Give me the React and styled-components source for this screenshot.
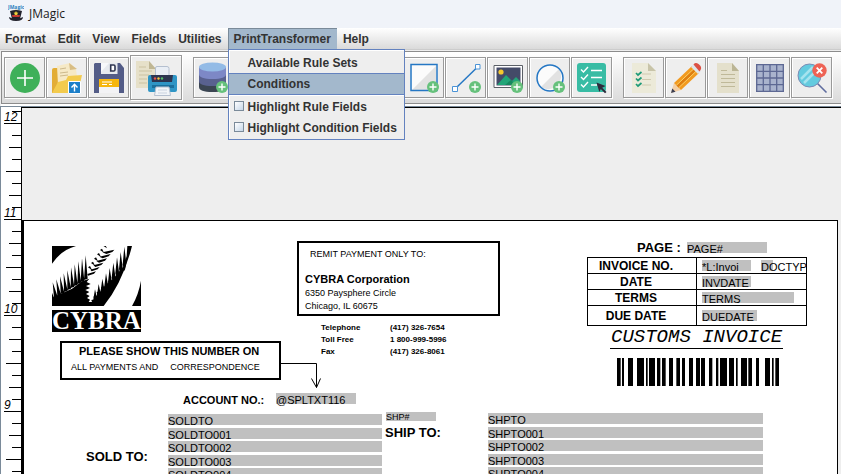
import React, { useState } from "react";
import styled, { createGlobalStyle, css } from "styled-components";
import { Barcode, Box, Table, Type } from "lucide-react";

const menus = [
  "Format",
  "Edit",
  "View",
  "Fields",
  "Utilities",
  "PrintTransformer",
  "Help",
];

const addresses = ["", "001", "002", "003", "004"];

// start and width of every bar, in thirds of a pixel
const bars = [
  [0, 11], [15, 6], [33, 15], [60, 21], [87, 5], [96, 18], [120, 10],
  [135, 11], [156, 12], [178, 11], [195, 9], [216, 12], [237, 12], [252, 12],
  [276, 10], [297, 7], [309, 21], [336, 15], [357, 5], [372, 18], [394, 11],
  [417, 9], [444, 15], [465, 5], [475, 11],
];

// one mark per eighth of an inch, going down
const marks = Array.from({ length: 33 }, (_, i) => {
  const n = i - 1;
  if (n % 8 === 0) return { size: 17, label: 12 - n / 8 };
  if (n % 4 === 0) return { size: 15 };
  if (n % 2 === 0) return { size: 12 };
  return { size: 9 };
});

const Plus = ({ x = 30, y = 30 }) => (
  <g>
    <circle cx={x} cy={y} r="6" fill="#66c17c" />
    <path
      d={`M${x - 3.5} ${y}h7M${x} ${y - 3.5}v7`}
      stroke="#fff"
      strokeWidth="1.4"
    />
  </g>
);

const NewIcon = () => (
  <Icon>
    <circle cx="21" cy="21" r="15" fill="#3fb059" />
    <path d="M21 13v16M13 21h16" stroke="#fff" strokeWidth="1.6" />
  </Icon>
);

const OpenIcon = () => (
  <Icon>
    <path d="M6 13q0-2 2-2h5v25H6z" fill="#e3ad35" />
    <path d="M11 9l13-3 6 6 2 16H12z" fill="#f6e9c6" />
    <path d="M23 6l1 7 7-1z" fill="#d8bd84" />
    <path
      d="M14 12l6-1M14 16l8-1M14 19l8-1"
      stroke="#cdb98c"
      strokeWidth="1"
    />
    <path d="M12 25l8-2 2-4 14-1-4 18H6z" fill="#f3cb4e" />
    <path d="M22.500 24.500h12v12h-12z" fill="#1c7fc9" stroke="#fff" />
    <path
      d="M28.500 34.500v-7M25.500 30.500l3-3.200 3 3.200"
      fill="none"
      stroke="#fff"
      strokeWidth="1.4"
    />
  </Icon>
);

const SaveIcon = () => (
  <Icon>
    <path d="M7 6h25l4 5v25H6V7z" fill="#535c87" />
    <path d="M13 6h16.500v11H13z" fill="#e6e9ee" />
    <path d="M13 6h8l-8 9z" fill="#f7f8fa" />
    <path
      d="M22.700 8h3q1.300 0 1.300 1.300v3.400q0 1.300-1.300 1.300h-3z"
      fill="#fff"
      stroke="#2f3550"
      strokeWidth="1.6"
    />
    <path d="M11 22h20v8H11z" fill="#f6b60d" />
    <path d="M11 30h20v6H11z" fill="#f3f3f5" />
    <path d="M14 25h10M14 27.500h5M21 27.500h3" stroke="#fff" />
  </Icon>
);

const PrintIcon = () => (
  <Icon $wide viewBox="1 1 50 43">
    <path d="M6 6h13l7 8v19H6z" fill="#e6e0c9" />
    <path d="M19 6v8h7z" fill="#bfb694" />
    <path
      d="M9 12h7M9 16h13M9 20h10M9 24h8M9 28h8"
      stroke="#cbc2a2"
      strokeWidth="1.2"
    />
    <path
      d="M25.500 13q0-1.500 1.500-1.500h10q2 0 2 2V21H25.500z"
      fill="#e9eef5"
      stroke="#b4bfcf"
    />
    <rect x="18" y="20" width="29" height="17" rx="2" fill="#2f95c5" />
    <path d="M21 20h22l-1 7H22z" fill="#2d3550" />
    <circle cx="25" cy="23.500" r="1.200" fill="#e8554a" />
    <circle cx="28.500" cy="23.500" r="1.200" fill="#f4c63d" />
    <circle cx="32" cy="23.500" r="1.200" fill="#54c06a" />
    <path d="M22 30h22v3H22z" fill="#1b6f9c" />
    <path d="M26 32h13l1.500 8.500h-16z" fill="#f1f4f8" stroke="#b4bfcf" />
    <path d="M28 35h9M28 38h9" stroke="#c9d2df" />
  </Icon>
);

const DatabaseIcon = () => (
  <Icon>
    <path d="M6 24v6q0 5 13.500 5T33 30v-6z" fill="#3b4552" />
    <path d="M6 17v7q0 5 13.500 5T33 24v-7z" fill="#59618f" />
    <path d="M6 10v7q0 5 13.500 5T33 17v-7z" fill="#7d88c6" />
    <ellipse cx="19.500" cy="10" rx="13.500" ry="4.500" fill="#93bbe6" />
    <Plus x={29} />
  </Icon>
);

const RectIcon = () => (
  <Icon>
    <path d="M7.500 7.500h27v26h-27z" fill="#fbfbfb" />
    <path d="M33 9v24H9z" fill="#e2e2e2" />
    <path
      d="M8 7.500h26v26H8z"
      fill="none"
      stroke="#2577c4"
      strokeWidth="1.5"
    />
    <Plus />
  </Icon>
);

const LineIcon = () => (
  <Icon>
    <path d="M12 30L31 11.500" stroke="#2577c4" strokeWidth="1.5" />
    <path
      d="M7.500 29.500h5v5h-5zM30.500 7.500h4.500v4.500h-4.500z"
      fill="#fff"
      stroke="#4a93d6"
    />
    <Plus />
  </Icon>
);

const ImageIcon = () => (
  <Icon>
    <path d="M7 8.500h28.500v22H7z" fill="#fff" stroke="#5a5f66" />
    <path d="M9.500 10.500h24v18h-24z" fill="#444b68" />
    <circle cx="14" cy="15" r="2.600" fill="#f7c92e" />
    <path d="M10 28l9-10 6 6 4-4 4 4v4z" fill="#22a578" />
    <path d="M18 28l6-5 5 5z" fill="#17885f" />
    <Plus />
  </Icon>
);

const CircleIcon = () => (
  <Icon>
    <circle cx="21" cy="21" r="13" fill="#fbfbfb" />
    <path d="M30 12a13 13 0 0 1-18 18z" fill="#e2e2e2" />
    <circle
      cx="21"
      cy="21"
      r="13"
      fill="none"
      stroke="#2577c4"
      strokeWidth="1.5"
    />
    <Plus />
  </Icon>
);

const RulesIcon = () => (
  <Icon>
    <rect x="6" y="6" width="29" height="29" rx="3" fill="#38bca4" />
    <path
      d="M10 12.500l2.500 2.500 4.500-5M10 20l2.500 2.500 4.500-5M10 27.500l2.500 2.500 4.500-5M20 13.500h11M20 20.500h11M20 28h6"
      fill="none"
      stroke="#fff"
      strokeWidth="1.4"
    />
    <path
      d="M25.500 25.500l9 3.500-3.300 1.700 4.300 4.300-1.500 1.300-4.200-4.300-1.500 3z"
      fill="#2e2a3c"
    />
  </Icon>
);

const ChecklistIcon = () => (
  <Icon>
    <path d="M9 6h16l8 8v22H9z" fill="#ecead9" />
    <path d="M25 6v8h8z" fill="#c8c4a9" />
    <path d="M19 17h9M19 22.500h9M19 28h9" stroke="#cfcab0" />
    <path
      d="M13 16l2 2 3.500-3M13 21.500l2 2 3.500-3M13 27l2 2 3.500-3"
      fill="none"
      stroke="#1f9b78"
      strokeWidth="1.7"
    />
  </Icon>
);

const PencilIcon = () => (
  <Icon>
    <path d="M6 36l3-10 7 7z" fill="#f3cfa6" />
    <path d="M6 36l1.300-4.500 3.200 3.200z" fill="#3c3f52" />
    <path d="M9 26l18-17 7 7-18 17z" fill="#f29a1f" />
    <path d="M11.300 28.300l18-17 2.400 2.400-18 17z" fill="#e07f10" />
    <path d="M11.300 28.300l18-17M13.700 30.700l18-17" stroke="#fbd36a" />
    <path d="M26 10l3-3 7 7-3 3z" fill="#dfe5ea" />
    <path d="M28.500 7.500q2-2.500 5-.5 4 3 2 6l-1 1.500z" fill="#dc5145" />
  </Icon>
);

const PageIcon = () => (
  <Icon>
    <path d="M10 6h15l7 8v22H10z" fill="#e4e0cc" />
    <path d="M25 6v8h7z" fill="#bbb595" />
    <path
      d="M14 13.500h6M14 17.500h14M14 21.500h14M14 25.500h14M14 29.500h14"
      stroke="#bfb999"
      strokeWidth="1.2"
    />
  </Icon>
);

const GridIcon = () => (
  <Icon>
    <path d="M7 7h28v28H7z" fill="#a9b3cd" />
    <path
      d="M7.700 7v28M14.300 7v28M21 7v28M27.700 7v28M34.300 7v28M7 7.700h28M7 14.300h28M7 21h28M7 27.700h28M7 34.300h28"
      stroke="#5d6893"
      strokeWidth="1.3"
    />
  </Icon>
);

const NoZoomIcon = () => (
  <Icon>
    <path d="M26 26l9.500 9.500" stroke="#5f6c9f" strokeWidth="1.6" />
    <circle
      cx="18.500"
      cy="18.500"
      r="11.500"
      fill="#63cbdf"
      stroke="#7c8bb5"
    />
    <path
      d="M10 22L22 10M13 26L26 13"
      stroke="#a5e3ee"
      strokeWidth="2.500"
    />
    <circle cx="28.500" cy="13.500" r="7.200" fill="#ee6355" />
    <path
      d="M25.700 10.700l5.600 5.600M31.300 10.700l-5.600 5.600"
      stroke="#fff"
      strokeWidth="1.8"
    />
  </Icon>
);

const HatIcon = () => (
  <HatSvg viewBox="0 0 16 16">
    <text x="0" y="4" fontSize="5" fontWeight="bold" fill="#2a7fc0">
      JMagic
    </text>
    <path d="M6 8l2-4 2 4z" fill="#e7b830" />
    <path d="M2 6q6-2 12 0l-2 8H4z" fill="#22222c" />
    <path d="M4 10h8l-.5 2h-7z" fill="#c5342f" />
    <path d="M8 6l.8 1.600 1.600.2-1.200 1.200.3 1.600L8 9.800l-1.500.8.3-1.600L5.600 7.800l1.600-.2z" fill="#f2d33c" />
    <path d="M1 12q7 4 14 0 0 4-7 4t-7-4z" fill="#22222c" />
  </HatSvg>
);

const leftSpikes = Array.from({ length: 11 }, (_, i) => {
  const x = i * 10;
  const y = 162 - i * 6;
  return `M${x - 4} ${y}L${x - 9 + i} ${y - 44 - i * 3}L${x + 7} ${y - 4}z`;
}).join("");

const rightSpikes = Array.from({ length: 9 }, (_, i) => {
  const x = 124 + i * 11;
  const y = 160 - i * 13;
  return `M${x} ${y}L${x + 5} ${y - 30 - i * 3}L${x + 11} ${y - 4}L${x + 6} ${y + 20}z`;
}).join("");

// the broken tips where the two halves of the leaf meet
const twigs = Array.from({ length: 6 }, (_, i) => {
  const x = 106 + i * 9;
  const y = 84 - i * 13;
  return `M${x} ${y}l${26 + i * 2} -8l-6 7l-18 6zM${x + 8} ${y - 24}l6 12l-12 -8z`;
}).join("");

const Logo = () => (
  <LogoSvg $x={28} $y={25} viewBox="0 0 89 86">
    <svg width="89" height="60" viewBox="0 0 267 180">
      <path d="M0 0h72Q28 12 0 53z" />
      <path d="M0 156L30 142 60 128 90 106 112 98 104 108 116 114 102 120 114 126 100 132 112 138 102 144 113 150 105 156 114 161 110 168H120L118 162 128 160 124 152 136 148 134 138 146 136 148 124 160 120 170 108 184 98 198 80 214 62 224 30 226 0H240Q212 110 155 180H0z" />
      <path d={leftSpikes} />
      <path d={rightSpikes} />
      <path d={twigs} />
      <path d="M267 104V180H240Q260 145 267 104z" />
    </svg>
    <path d="M0 64h89v22H0z" />
    <text x="0" y="83" fontSize="25" fontWeight="bold" fill="#fff">
      CYBRA
    </text>
  </LogoSvg>
);

const App = () => {
  const [ruleFields, setRuleFields] = useState(false);
  const [conditionFields, setConditionFields] = useState(false);

  return (
    <Window>
      <GlobalStyle />
      <TitleBar>
        <HatIcon />
        JMagic
      </TitleBar>

      <MenuBar>
        {menus.map((name) => (
          <MenuItem key={name}>
            <MenuButton type="button" $open={name === "PrintTransformer"}>
              {name}
            </MenuButton>
            {name === "PrintTransformer" && (
              <Popup>
                <PopupButton type="button">Available Rule Sets</PopupButton>
                <PopupButton type="button" $active>
                  Conditions
                </PopupButton>
                <Separator />
                <CheckRow>
                  <Check
                    type="checkbox"
                    checked={ruleFields}
                    onChange={() => setRuleFields(!ruleFields)}
                  />
                  Highlight Rule Fields
                </CheckRow>
                <CheckRow>
                  <Check
                    type="checkbox"
                    checked={conditionFields}
                    onChange={() => setConditionFields(!conditionFields)}
                  />
                  Highlight Condition Fields
                </CheckRow>
              </Popup>
            )}
          </MenuItem>
        ))}
      </MenuBar>

      <ToolBar>
        <ToolGroup>
          <Tool aria-label="New"><NewIcon /></Tool>
          <Tool aria-label="Open"><OpenIcon /></Tool>
          <Tool aria-label="Save"><SaveIcon /></Tool>
          <Tool aria-label="Print" $wide><PrintIcon /></Tool>
        </ToolGroup>
        <ToolGroup>
          <Tool aria-label="Database"><DatabaseIcon /></Tool>
          <Tool aria-label="Text"><Type /></Tool>
          <Tool aria-label="Barcode"><Barcode /></Tool>
          <Tool aria-label="Table"><Table /></Tool>
          <Tool aria-label="Box"><Box /></Tool>
          <Tool aria-label="Rectangle"><RectIcon /></Tool>
          <Tool aria-label="Line"><LineIcon /></Tool>
          <Tool aria-label="Image"><ImageIcon /></Tool>
          <Tool aria-label="Circle"><CircleIcon /></Tool>
          <Tool aria-label="Rules"><RulesIcon /></Tool>
        </ToolGroup>
        <ToolGroup>
          <Tool aria-label="Checklist"><ChecklistIcon /></Tool>
          <Tool aria-label="Edit"><PencilIcon /></Tool>
          <Tool aria-label="Page"><PageIcon /></Tool>
          <Tool aria-label="Grid"><GridIcon /></Tool>
          <Tool aria-label="Reset zoom"><NoZoomIcon /></Tool>
        </ToolGroup>
      </ToolBar>

      <Work>
        <Ruler>
          {marks.map((mark, i) => (
            <Mark key={i} $size={mark.size}>
              {mark.label}
            </Mark>
          ))}
        </Ruler>
        <Desk>
          <Page>
            <Logo />

            <RemitBox $x={273} $y={20}>
              <RemitTitle>REMIT PAYMENT ONLY TO:</RemitTitle>
              <Company>CYBRA Corporation</Company>
              <RemitLine>6350 Paysphere Circle</RemitLine>
              <RemitLine>Chicago, IL 60675</RemitLine>
            </RemitBox>

            <Phones $x={297} $y={101}>
              <span>Telephone</span>
              <span>(417) 326-7654</span>
              <span>Toll Free</span>
              <span>1 800-999-5996</span>
              <span>Fax</span>
              <span>(417) 326-8061</span>
            </Phones>

            <NoticeBox $x={36} $y={120}>
              <NoticeTitle>PLEASE SHOW THIS NUMBER ON</NoticeTitle>
              <NoticeText>
                <span>ALL PAYMENTS AND</span>
                <span>CORRESPONDENCE</span>
              </NoticeText>
            </NoticeBox>
            <ArrowSvg $x={257} $y={138} viewBox="0 0 42 32">
              <path d="M0 4.500h35.500v24M30.500 19.500l5 9 4-9" />
            </ArrowSvg>

            <Label $x={159} $y={171} $size={11}>ACCOUNT NO.:</Label>
            <PlacedField $x={252} $y={172} $width={80}>@SPLTXT116</PlacedField>

            <Label $x={62} $y={228} $size={13}>SOLD TO:</Label>
            <FieldList $x={144} $y={193}>
              {addresses.map((n) => (
                <Field key={n} $width={214}>SOLDTO{n}</Field>
              ))}
            </FieldList>

            <SmallField $x={362} $y={191} $width={50}>SHP#</SmallField>
            <Label $x={361} $y={204} $size={13}>SHIP TO:</Label>
            <FieldList $x={464} $y={192}>
              {addresses.map((n) => (
                <Field key={n} $width={275}>SHPTO{n}</Field>
              ))}
            </FieldList>

            <Label $x={613} $y={19} $size={13}>PAGE :</Label>
            <PlacedField $x={663} $y={21} $width={80}>PAGE#</PlacedField>

            <Invoice $x={563} $y={36}>
              <tbody>
                <tr>
                  <th scope="row">INVOICE NO.</th>
                  <td>
                    <Pair>
                      <Field $width={49}>*L:Invoi</Field>
                      <Field $width={12}>DOCTYP</Field>
                    </Pair>
                  </td>
                </tr>
                <tr>
                  <th scope="row">DATE</th>
                  <td><Field $width={49}>INVDATE</Field></td>
                </tr>
                <tr>
                  <th scope="row">TERMS</th>
                  <td><Field $width={92}>TERMS</Field></td>
                </tr>
                <tr>
                  <th scope="row">DUE DATE</th>
                  <td><Field $width={55}>DUEDATE</Field></td>
                </tr>
              </tbody>
            </Invoice>

            <Customs $x={586} $y={105}>CUSTOMS INVOICE</Customs>
            <BarcodeSvg $x={593} $y={137} viewBox="0 0 486 84">
              {bars.map(([x, w]) => (
                <rect key={x} x={x} width={w} height="84" />
              ))}
            </BarcodeSvg>
          </Page>
        </Desk>
      </Work>
    </Window>
  );
};

export default App;

const GlobalStyle = createGlobalStyle`
  * {
    box-sizing: border-box;
  }
  body {
    margin: 0;
    overflow: hidden;
    font-family: "Liberation Sans", Arial, sans-serif;
  }
`;

// anything the user dropped on the form
const placed = css`
  position: absolute;
  left: ${({ $x }) => $x}px;
  top: ${({ $y }) => $y}px;
`;

const Window = styled.div`
  display: flex;
  flex-direction: column;
  width: 100%;
  height: 100vh;
  overflow: hidden;
  background-color: #eee;
`;

const TitleBar = styled.header`
  display: flex;
  align-items: center;
  gap: 5px;
  flex: none;
  height: 28px;
  padding: 0 8px 2px;
  background-color: #f0f3f9;
  color: #1b1b1b;
  font-family: "Open Sans", "Noto Sans", sans-serif;
  font-size: 12px;
`;

const HatSvg = styled.svg`
  width: 16px;
  height: 16px;
`;

const MenuBar = styled.nav`
  display: flex;
  flex: none;
  height: 22px;
  background: linear-gradient(#fff, #dadada);
  border-bottom: 1px solid #ccc;
`;

const MenuItem = styled.div`
  position: relative;
  &:first-child {
    margin-left: -1px;
  }
`;

const menuText = css`
  border: 0;
  background-color: transparent;
  color: #333;
  font-family: inherit;
  font-size: 12px;
  font-weight: bold;
  text-align: left;
  white-space: nowrap;
`;

const MenuButton = styled.button`
  ${menuText}
  height: 21px;
  padding: 0 6px;
  ${({ $open }) =>
    $open &&
    css`
      background-color: #a3b8cc;
      box-shadow: inset 1px 1px 0 #7a8a99;
    `}
`;

const Popup = styled.div`
  position: absolute;
  z-index: 2;
  top: 21px;
  left: 0;
  display: flex;
  flex-direction: column;
  width: 177px;
  padding: 2px 0 1px;
  border: 1px solid #6382bf;
  background-color: #eee;
  box-shadow: inset 1px 1px 0 #fff;
`;

const PopupButton = styled.button`
  ${menuText}
  height: 21px;
  padding: 0 19px;
  ${({ $active }) =>
    $active &&
    css`
      background-color: #a3b8cc;
      border-top: 1px solid #6382bf;
    `}
`;

const Separator = styled.div`
  height: 2px;
  background-color: #fff;
  border-top: 1px solid #6382bf;
`;

const CheckRow = styled.label`
  ${menuText}
  display: flex;
  align-items: center;
  gap: 4px;
  height: 21px;
  padding: 0 5px;
`;

const Check = styled.input`
  appearance: none;
  flex: none;
  width: 10px;
  height: 10px;
  margin: 0 0 2px;
  border: 1px solid #7a8a99;
  background: linear-gradient(135deg, #fff, #c5d6e8);
  &:checked {
    background: #7a8a99;
  }
`;

const ToolBar = styled.div`
  display: flex;
  align-items: center;
  gap: 11px;
  flex: none;
  height: 53px;
  margin: 1px 0 2px 1px;
  padding: 0 2px;
  background: linear-gradient(#fff, #dadada);
  border: 1px solid #8c8c8c;
  border-right: 0;
  box-shadow: 0 2px 0 #fff;
`;

const ToolGroup = styled.div`
  display: flex;
  align-items: center;
  gap: 1px;
`;

const Tool = styled.button.attrs({ type: "button" })`
  display: flex;
  align-items: center;
  justify-content: center;
  flex: none;
  width: ${({ $wide }) => ($wide ? 52 : 41)}px;
  height: ${({ $wide }) => ($wide ? 45 : 41)}px;
  padding: 0;
  background-color: #eee;
  border: 1px solid #999;
  box-shadow: 1px 1px 0 #fff, inset 1px 1px 0 #fff;
`;

const Icon = styled.svg.attrs(({ viewBox }) => ({
  viewBox: viewBox || "1 1 39 39",
}))`
  flex: none;
  width: ${({ $wide }) => ($wide ? 50 : 39)}px;
  height: ${({ $wide }) => ($wide ? 43 : 39)}px;
`;

const Work = styled.main`
  display: flex;
  flex: 1;
  min-height: 0;
  border-top: 1px solid #7a8a99;
  border-left: 1px solid #7a8a99;
`;

const Ruler = styled.div`
  display: flex;
  flex-direction: column;
  flex: none;
  width: 21px;
  overflow: hidden;
  background-color: #fff;
  border-right: 1px solid #000;
`;

const Mark = styled.div`
  flex: none;
  width: ${({ $size }) => $size}px;
  height: 12px;
  margin-left: auto;
  border-bottom: 1px solid #000;
  font-size: 12px;
  font-style: italic;
  line-height: 11px;
  &:first-child {
    height: 5px;
  }
`;

const Desk = styled.div`
  flex: 1;
  padding: 112px 3px 0 0;
  overflow: hidden;
  border-top: 1px solid #000;
`;

const Page = styled.div`
  position: relative;
  height: 1056px;
  background-color: #fff;
  border: 1px solid #000;
  border-left-width: 2px;
  color: #000;
  white-space: nowrap;
`;

const LogoSvg = styled.svg`
  ${placed}
  width: 89px;
  height: 86px;
  font-family: "Liberation Serif", serif;
`;

const RemitBox = styled.div`
  ${placed}
  width: 203px;
  height: 75px;
  padding: 5px 6px;
  border: 2px solid #000;
  font-size: 9px;
`;

const RemitTitle = styled.div`
  padding-left: 5px;
  line-height: 12px;
`;

const Company = styled.div`
  margin-top: 12px;
  font-size: 11px;
  font-weight: bold;
  line-height: 15px;
`;

const RemitLine = styled.div`
  line-height: 13px;
`;

const Phones = styled.div`
  ${placed}
  display: grid;
  grid-template-columns: 69px auto;
  font-size: 8px;
  font-weight: bold;
  line-height: 12px;
`;

const NoticeBox = styled.div`
  ${placed}
  width: 221px;
  height: 39px;
  padding: 0 9px;
  border: 2px solid #000;
`;

const NoticeTitle = styled.div`
  padding-left: 8px;
  font-size: 11px;
  font-weight: bold;
  line-height: 16px;
`;

const NoticeText = styled.div`
  display: flex;
  gap: 12px;
  font-size: 9px;
  line-height: 16px;
`;

const ArrowSvg = styled.svg`
  ${placed}
  width: 42px;
  height: 32px;
  fill: none;
  stroke: #000;
`;

const Label = styled.div`
  ${placed}
  font-size: ${({ $size }) => $size}px;
  font-weight: bold;
  line-height: 16px;
`;

const Field = styled.div`
  width: ${({ $width }) => $width}px;
  height: 11px;
  background-color: #c0c0c0;
  font-size: 11px;
  line-height: 14px;
`;

const PlacedField = styled(Field)`
  ${placed}
`;

const SmallField = styled(PlacedField)`
  height: 9px;
  font-size: 9px;
  line-height: 11px;
`;

const FieldList = styled.div`
  ${placed}
  ${Field} {
    margin-bottom: 3px;
  }
  ${Field}:nth-child(even) {
    margin-bottom: 2px;
  }
`;

const Invoice = styled.table`
  ${placed}
  width: 220px;
  table-layout: fixed;
  border-collapse: collapse;
  th,
  td {
    height: 16px;
    padding: 0;
    border: 1px solid #000;
  }
  th {
    width: 109px;
    padding-right: 12px;
    font-size: 12px;
    line-height: 12px;
  }
  td {
    padding-left: 5px;
  }
  tr:last-child > * {
    height: 20px;
  }
`;

const Pair = styled.div`
  display: flex;
  gap: 10px;
`;

const Customs = styled.div`
  ${placed}
  padding: 0 1px;
  border-bottom: 1px solid #000;
  font-family: "Liberation Mono", monospace;
  font-size: 19px;
  font-style: italic;
  line-height: 22px;
`;

const BarcodeSvg = styled.svg`
  ${placed}
  width: 162px;
  height: 28px;
`;
